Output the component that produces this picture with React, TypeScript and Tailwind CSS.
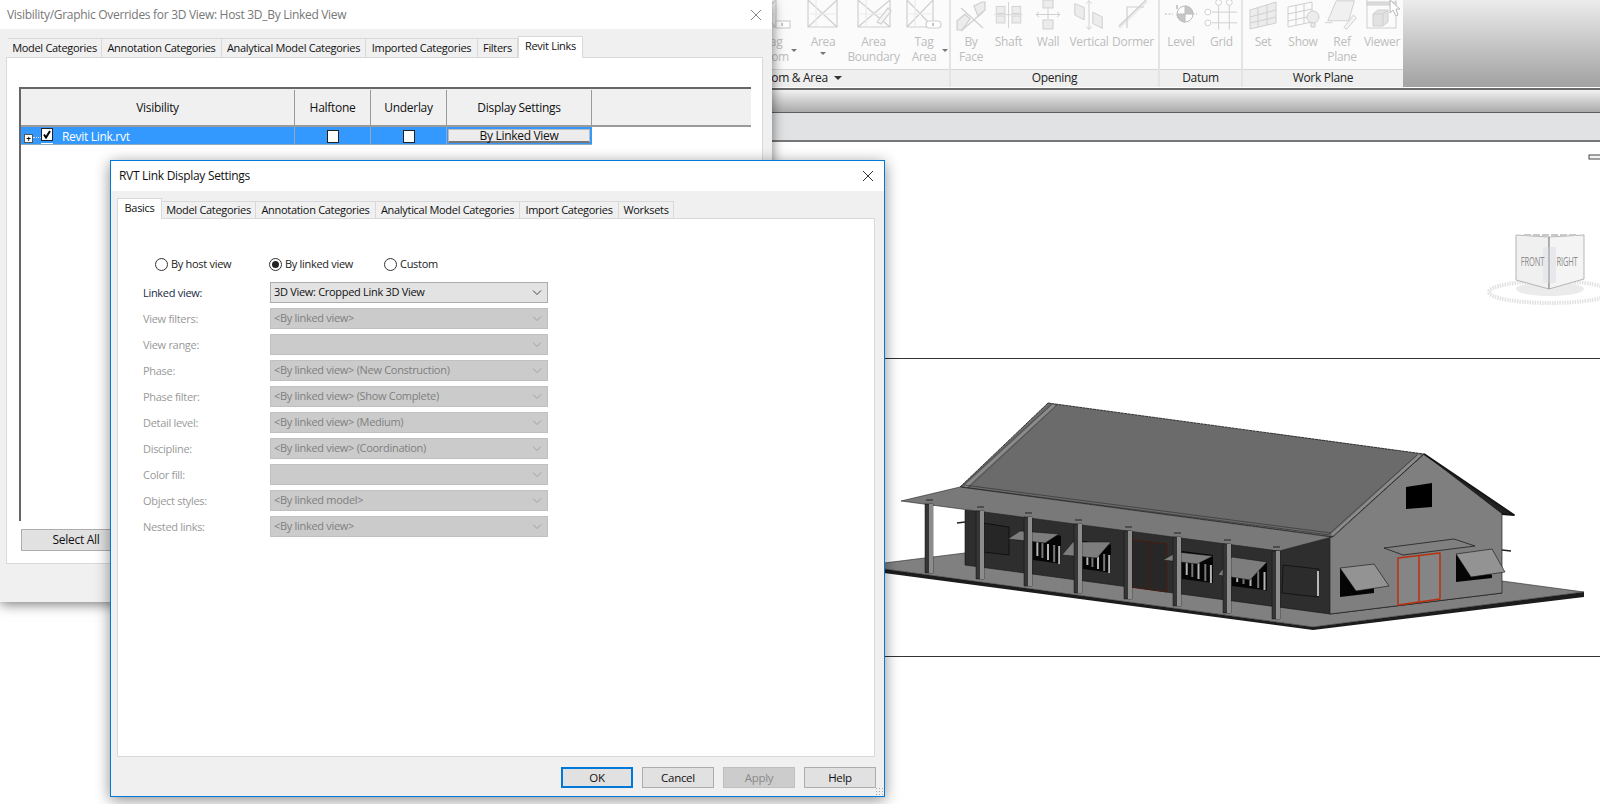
import type { ReactNode } from "react";

const FONT = "font-['Open_Sans','Noto_Sans',sans-serif] tracking-[-0.3px]";

// stroke and fill of the disabled ribbon icons
const S = "#cfcfcf";
const F = "#ececec";

function Crossed({ x = 6, w = 29, pencil = false, badge = "" }: { x?: number; w?: number; pencil?: boolean; badge?: string }) {
  return (
    <svg width="48" height="32" viewBox="0 0 48 32" fill="none" stroke={S} strokeWidth="1.2">
      <path d={`M${x} -1V27H${x + w}V-1M${x} 0L${x + w} 27M${x + w} 0L${x} 27`} />
      <path d={`M${x + 8} 0V27M${x} 14H${x + w}`} stroke="#ececec" />
      {pencil && <path d="M27 22L38 8L41 11L31 24Z" fill="#f4f4f4" />}
      {badge === "square" && (
        <g>
          <rect x="27" y="21" width="14" height="7" fill="#fff" />
          <path d="M33 23V26" stroke="#888" strokeWidth="1" />
        </g>
      )}
      {badge === "round" && (
        <g>
          <rect x="26" y="21" width="15" height="7" rx="3.5" fill="#fff" />
          <path d="M33 23V26" stroke="#888" strokeWidth="1" />
        </g>
      )}
    </svg>
  );
}

function IconByFace() {
  return (
    <svg width="40" height="32" viewBox="0 0 40 32" fill="none" stroke={S} strokeWidth="1.2">
      <path d="M6 21L14 14L19 19L11 30H6Z" fill={F} />
      <path d="M23 6L31 2H34V10L27 16Z" fill={F} />
      <path d="M10 8L32 28M32 12L10 31" />
    </svg>
  );
}

function IconShaft() {
  return (
    <svg width="40" height="32" viewBox="0 0 40 32" fill={F} stroke={S} strokeWidth="1">
      <rect x="6" y="5" width="10" height="8" />
      <rect x="24" y="5" width="10" height="8" />
      <rect x="6" y="16" width="10" height="8" />
      <rect x="24" y="16" width="10" height="8" />
      <path d="M20 0V30M4 14.500H36" fill="none" />
    </svg>
  );
}

function IconWall() {
  return (
    <svg width="40" height="32" viewBox="0 0 40 32" fill={F} stroke={S} strokeWidth="1">
      <rect x="15" y="0" width="10" height="8" />
      <rect x="15" y="20" width="10" height="9" />
      <path d="M8 14.500H32M20 9V19M11 12L8 14.500L11 17M29 12L32 14.500L29 17" fill="none" />
    </svg>
  );
}

function IconVertical() {
  return (
    <svg width="40" height="32" viewBox="0 0 40 32" fill={F} stroke={S} strokeWidth="1">
      <path d="M5 3L15 7V20L5 15Z" />
      <path d="M24 12L34 17V29L24 24Z" />
      <path d="M20 0V30M17 3L20 0L23 3M17 27L20 30L23 27" fill="none" />
    </svg>
  );
}

function IconDormer() {
  return (
    <svg width="40" height="32" viewBox="0 0 40 32" fill="none" stroke={S} strokeWidth="1.2">
      <path d="M6 28L34 1" strokeWidth="3" stroke="#ececec" />
      <path d="M14 28V7H31M6 26L33 0" />
    </svg>
  );
}

function IconLevel() {
  return (
    <svg width="40" height="32" viewBox="0 0 40 32" fill="none" stroke="#bcbcbc" strokeWidth="1">
      <path d="M4 14H12M28 14H36" strokeDasharray="2 1.500" />
      <path d="M16 5V9" stroke="#999" />
      <circle cx="24" cy="14" r="8" fill="#fff" />
      <path d="M24 14V6A8 8 0 0 1 32 14ZM24 14V22A8 8 0 0 1 16 14Z" fill="#c6c6c6" />
    </svg>
  );
}

function IconGrid() {
  return (
    <svg width="40" height="32" viewBox="0 0 40 32" fill="#fff" stroke={S} strokeWidth="1">
      <path d="M10 12H36M10 23H36M17 4V30M28 4V30" />
      <circle cx="6" cy="12" r="3" />
      <circle cx="6" cy="23" r="3" />
      <circle cx="17" cy="2" r="3" />
      <circle cx="28" cy="2" r="3" />
    </svg>
  );
}

function IconSet() {
  return (
    <svg width="40" height="32" viewBox="0 0 40 32" fill={F} stroke={S} strokeWidth="1">
      <path d="M7 10L33 2V23L7 29Z" />
      <path d="M15 8V27M24 5V25M7 17L33 10M7 23L33 17" fill="none" />
    </svg>
  );
}

function IconShow() {
  return (
    <svg width="40" height="32" viewBox="0 0 40 32" fill="none" stroke={S} strokeWidth="1">
      <path d="M5 7L29 2V22L5 27Z" />
      <path d="M13 5V25M21 4V24M5 14L29 9M5 21L29 16" />
      <circle cx="30" cy="17" r="6" fill={F} />
      <path d="M28 23H32V27H28Z" fill={F} />
    </svg>
  );
}

function IconRefPlane() {
  return (
    <svg width="40" height="32" viewBox="0 0 40 32" fill="none" stroke={S} strokeWidth="1">
      <path d="M14 0H33L27 21H5Z" fill="#f0f0f0" />
      <path d="M2 23H10" />
      <path d="M22 28L32 15L35 18L25 30Z" fill="#f4f4f4" />
    </svg>
  );
}

function IconViewer() {
  return (
    <svg width="40" height="32" viewBox="0 0 40 32" fill="none" stroke={S} strokeWidth="1">
      <rect x="5" y="-2" width="29" height="30" fill="#fbfbfb" />
      <rect x="5" y="2" width="29" height="3" fill="#dddddd" />
      <path d="M11 14L16 10H26V22L21 26H11Z" fill="#e2e2e2" />
      <path d="M11 14H21V26M21 14L26 10" />
      <path d="M28 0L28 13L31 10L34 16L36 15L34 9H38Z" fill="#ffffff" stroke="#b8b8b8" />
    </svg>
  );
}

type RibbonBtn = { label: ReactNode; width: string; icon: ReactNode; caret?: "side" | "below" };

function RibbonButton({ label, width, icon, caret }: RibbonBtn) {
  return (
    <div className={`relative flex h-full flex-col items-center ${width}`}>
      <div className="flex h-[34px] w-full shrink-0 justify-center overflow-hidden">{icon}</div>
      <div className="text-center text-[12px] leading-[15px] text-[#bdbdbd]">{label}</div>
      {caret === "side" && <span className="absolute right-[1px] top-[49px] h-0 w-0 border-x-[3px] border-t-[3px] border-x-transparent border-t-[#777]" />}
      {caret === "below" && <span className="absolute left-1/2 top-[52px] h-0 w-0 -translate-x-1/2 border-x-[3px] border-t-[3px] border-x-transparent border-t-[#777]" />}
    </div>
  );
}

function RibbonPanel({ title, className, children }: { title: ReactNode; className: string; children: ReactNode }) {
  return (
    <div className={`flex h-full flex-col ${className}`}>
      <div className="flex h-[69px] justify-end bg-[#fbfbfb]">{children}</div>
      <div className="flex h-[18px] items-center justify-center gap-[6px] border-t border-[#d6d6d6] bg-[#efefef] pb-[2px] text-[12px] text-[#222]">{title}</div>
    </div>
  );
}

function Ribbon() {
  return (
    <div className="flex h-[87px] shrink-0 bg-gradient-to-b from-[#ececec] to-[#a2a2a2]">
      <div className="w-[650px] bg-[#fbfbfb]" />
      <RibbonPanel
        className="w-[299px]"
        title={
          <>
            Room &amp; Area
            <span className="h-0 w-0 border-x-[4px] border-t-[4px] border-x-transparent border-t-[#333]" />
          </>
        }
      >
        <RibbonButton width="w-[50px]" caret="side" icon={<Crossed badge="square" x={-2} />} label={<>Tag<br />Room</>} />
        <RibbonButton width="w-[50px]" caret="below" icon={<Crossed x={9} />} label="Area" />
        <RibbonButton width="w-[51px]" icon={<Crossed x={8} w={32} pencil />} label={<>Area<br />Boundary</>} />
        <RibbonButton width="w-[50px]" caret="side" icon={<Crossed x={7} w={26} badge="round" />} label={<>Tag<br />Area</>} />
      </RibbonPanel>
      <div className="w-[2px] bg-[#e4e4e4]" />
      <RibbonPanel className="w-[207px]" title="Opening">
        <RibbonButton width="w-[40px]" icon={<IconByFace />} label={<>By<br />Face</>} />
        <RibbonButton width="w-[35px]" icon={<IconShaft />} label="Shaft" />
        <RibbonButton width="w-[44px]" icon={<IconWall />} label="Wall" />
        <RibbonButton width="w-[38px]" icon={<IconVertical />} label="Vertical" />
        <RibbonButton width="w-[50px]" icon={<IconDormer />} label="Dormer" />
      </RibbonPanel>
      <div className="w-[2px] bg-[#e4e4e4]" />
      <RibbonPanel className="w-[81px]" title="Datum">
        <RibbonButton width="w-[42px]" icon={<IconLevel />} label="Level" />
        <RibbonButton width="w-[39px]" icon={<IconGrid />} label="Grid" />
      </RibbonPanel>
      <div className="w-[2px] bg-[#e4e4e4]" />
      <RibbonPanel className="w-[160px]" title="Work Plane">
        <RibbonButton width="w-[40px]" icon={<IconSet />} label="Set" />
        <RibbonButton width="w-[40px]" icon={<IconShow />} label="Show" />
        <RibbonButton width="w-[38px]" icon={<IconRefPlane />} label={<>Ref<br />Plane</>} />
        <RibbonButton width="w-[42px]" icon={<IconViewer />} label="Viewer" />
      </RibbonPanel>
      <div className="flex-1" />
    </div>
  );
}

const COLUMNS = [
  [929, 504, 573],
  [980, 511, 579],
  [1028, 517, 586],
  [1078, 524, 593],
  [1128, 531, 599],
  [1177, 537, 606],
  [1227, 544, 613],
  [1276, 551, 619],
];

function AwningWindow({ x, y, w, awning }: { x: number; y: number; w: number; awning: string }) {
  const slope = 0.13;
  const bars = [0.12, 0.3, 0.5, 0.72, 0.9];
  return (
    <g>
      <polygon points={`${x},${y} ${x + w},${y + w * slope} ${x + w},${y + w * slope + 28} ${x},${y + 28}`} fill="#050505" />
      {bars.map((b, i) => (
        <rect key={i} x={x + w * b} y={y + 10 + i} width="2" height={14 + i} fill={i % 2 ? "#777" : "#b4b4b4"} />
      ))}
      <polygon points={awning} fill="#7d7d7d" stroke="#111" strokeWidth="0.5" />
    </g>
  );
}

// perspective render of the linked model, in page coordinates
function Building() {
  return (
    <g strokeLinejoin="round">
      {/* slab */}
      <polygon points="884,569 884,573 1313,630 1584,597 1584,592 1313,627" fill="#1c1c1c" />
      <polygon points="884,563 965,553 1502,581 1584,592 1313,627 884,569" fill="#808080" stroke="#222" strokeWidth="0.6" />
      <path d="M1330 614L1502 593" stroke="#111" fill="none" strokeWidth="0.8" />
      {/* porch wall */}
      <polygon points="965,510 1332,537 1330,614 965,565" fill="#2e2e2e" stroke="#111" strokeWidth="0.6" />
      {/* gable wall */}
      <polygon points="1330,537 1424,454 1502,513 1502,593 1330,614" fill="#7f7f7f" stroke="#222" strokeWidth="0.7" />
      {/* roof */}
      <polygon points="1048,403 1424,454 1332,537 960,487" fill="#6b6b6b" stroke="#111" strokeWidth="0.8" strokeDasharray="3 0.500" />
      <path d="M1054 405L965 487" stroke="#8c8c8c" strokeWidth="2.500" fill="none" />
      <path d="M1052 404L962 486M1057 405L968 488" stroke="#333" strokeWidth="0.5" fill="none" />
      <path d="M1420 455L1332 535" stroke="#8c8c8c" strokeWidth="2.500" fill="none" />
      <path d="M1424 454L1333 537M1417 455L1329 534" stroke="#333" strokeWidth="0.6" fill="none" />
      <path d="M1424 454L1514 515L1502 514" stroke="#151515" strokeWidth="1.800" fill="#222" />
      {/* porch roof */}
      <polygon points="960,487 901,501 1279,551 1332,537" fill="#797979" stroke="#222" strokeWidth="0.6" />
      <path d="M962 487L1330 535M964 485L1331 533" stroke="#2c2c2c" strokeWidth="0.6" fill="none" />
      {/* porch windows */}
      <polygon points="983,523 1009,527 1009,555 983,552" fill="#262626" stroke="#0a0a0a" strokeWidth="0.8" />
      <AwningWindow x={1033} y={532} w={28} awning="1008,539 1020,531 1059,534 1045,543" />
      <AwningWindow x={1083} y={541} w={28} awning="1062,555 1073,542 1111,542 1097,558" />
      <polygon points="1132,540 1167,544 1167,592 1132,587" fill="#272727" stroke="#4a1a10" strokeWidth="1" />
      <path d="M1149 543V590" stroke="#4a1a10" strokeWidth="1" />
      <AwningWindow x={1182} y={551} w={31} awning="1163,560 1177,552 1213,556 1197,564" />
      <AwningWindow x={1232} y={558} w={35} awning="1218,575 1232,557 1267,562 1250,580" />
      <polygon points="1283,565 1319,569 1318,597 1282,593" fill="#2c2c2c" stroke="#0a0a0a" strokeWidth="0.7" />
      <rect x="1317" y="571" width="2" height="25" fill="#b8b8b8" />
      {/* columns */}
      {COLUMNS.map(([x, top, bottom]) => (
        <g key={x}>
          <rect x={x - 4} y={top} width="8" height={bottom - top} fill="#353535" stroke="#111" strokeWidth="0.5" />
          <rect x={x} y={top} width="4" height={bottom - top} fill="#8c8c8c" />
          <path d={`M${x - 3} ${top - 4}H${x + 4}`} stroke="#222" strokeWidth="1" />
        </g>
      ))}
      {/* gable windows and door */}
      <polygon points="1406,487 1432,483 1432,507 1406,509" fill="#000" />
      <polygon points="1340,568 1340,597 1374,593 1374,586" fill="#050505" />
      <polygon points="1340,568 1374,564 1389,586 1356,591" fill="#939393" stroke="#111" strokeWidth="0.6" />
      <polygon points="1398,558 1440,553 1440,599 1398,605" fill="#858585" stroke="#b8300f" strokeWidth="1.500" />
      <path d="M1419 556V602" stroke="#b8300f" strokeWidth="1.500" />
      <polygon points="1384,548 1454,539 1475,546 1403,555" fill="#808080" stroke="#111" strokeWidth="0.7" />
      <polygon points="1456,554 1456,582 1492,578 1492,575" fill="#050505" />
      <polygon points="1456,554 1492,549 1505,572 1471,577" fill="#939393" stroke="#111" strokeWidth="0.6" />
      <path d="M957 523L965 522M1502 550L1511 551" stroke="#222" strokeWidth="1.500" />
    </g>
  );
}

function ViewCube() {
  return (
    <g>
      <ellipse cx="1550" cy="292" rx="61" ry="11" fill="none" stroke="#e2e2e2" strokeWidth="4" strokeDasharray="1.500 1" />
      <ellipse cx="1550" cy="289" rx="34" ry="7" fill="#e2e2e2" opacity="0.7" />
      <polygon points="1516,235 1549,237 1549,289 1516,280" fill="#f0f0f0" stroke="#b5b5b5" />
      <polygon points="1549,237 1584,235 1584,279 1549,289" fill="#f4f4f4" stroke="#b5b5b5" />
      <rect x="1543" y="247" width="13" height="36" fill="#e6e8eb" />
      <path d="M1549 237V289" stroke="#8f8f8f" />
      <path d="M1524 235H1578" stroke="#c8c8c8" strokeWidth="2" strokeDasharray="7 2" />
      {/* the cube's labels are tall and narrow, so squeeze them sideways */}
      <text transform="translate(1532.500 266) scale(0.58 1)" fontSize="13" textAnchor="middle" fill="#8c8c8c" fontFamily="Open Sans">FRONT</text>
      <text transform="translate(1567 266) scale(0.58 1)" fontSize="13" textAnchor="middle" fill="#8c8c8c" fontFamily="Open Sans">RIGHT</text>
    </g>
  );
}

function Canvas() {
  return (
    <svg className="block h-[662px] w-[1600px] bg-white" viewBox="0 142 1600 662">
      <path d="M740 358.500H1600M740 656.500H1600" stroke="#333" strokeWidth="1" />
      <rect x="1589" y="155" width="13" height="4" fill="#f4f4f4" stroke="#444" />
      <Building />
      <ViewCube />
    </svg>
  );
}

function CloseIcon({ color }: { color: string }) {
  return (
    <svg width="12" height="12" viewBox="0 0 12 12" stroke={color} strokeWidth="1" fill="none">
      <path d="M1 1L11 11M11 1L1 11" />
    </svg>
  );
}

function CheckBox({ checked = false }: { checked?: boolean }) {
  return (
    <span className="flex h-[13px] w-[12px] items-center justify-center border border-[#222] bg-white">
      {checked && (
        <svg width="8" height="9" viewBox="0 0 8 9" fill="none" stroke="#000" strokeWidth="2">
          <path d="M1 4.500L3 7.500L7 1" />
        </svg>
      )}
    </span>
  );
}

const BACK_TABS = [
  ["Model Categories", "w-[94px]"],
  ["Annotation Categories", "w-[120px]"],
  ["Analytical Model Categories", "w-[144px]"],
  ["Imported Categories", "w-[112px]"],
  ["Filters", "w-[40px]"],
];

function OverridesDialog() {
  return (
    <div className="absolute left-0 top-0 flex h-[602px] w-[772px] flex-col bg-[#f0f0f0] shadow-[0_2px_12px_rgba(0,0,0,0.55)]">
      <div className="flex h-[29px] shrink-0 items-center justify-between bg-white pl-[7px] pr-[10px] text-[12px] text-[#777]">
        <span>Visibility/Graphic Overrides for 3D View: Host 3D_By Linked View</span>
        <CloseIcon color="#888" />
      </div>
      <div className="mt-[7px] flex h-[21px] items-end pl-[8px] text-[11px] text-[#111]">
        {BACK_TABS.map(([name, w]) => (
          <div key={name} className={`flex h-[19px] items-center justify-center border-r border-t border-[#d9d9d9] ${w}`}>
            {name}
          </div>
        ))}
        <div className="z-10 -mb-px flex h-[22px] w-[65px] items-center justify-center border-x border-t border-[#d9d9d9] bg-white pb-[2px]">Revit Links</div>
      </div>
      <div className="ml-[6px] flex h-[507px] w-[757px] flex-col border border-[#d9d9d9] bg-white pl-[12px] pt-[29px]">
        <div className="flex h-[434px] w-[732px] flex-col border-l-2 border-t-2 border-[#666]">
          <div className="flex h-[38px] shrink-0 border-b-2 border-[#9a9a9a] bg-[#f0f0f0] pt-[1px] text-center text-[12px] text-[#111]">
            <div className="flex w-[274px] items-center justify-center border-r border-[#9a9a9a]">Visibility</div>
            <div className="flex w-[76px] items-center justify-center border-r border-[#9a9a9a]">Halftone</div>
            <div className="flex w-[76px] items-center justify-center border-r border-[#9a9a9a]">Underlay</div>
            <div className="flex w-[145px] items-center justify-center border-r border-[#9a9a9a]">Display Settings</div>
          </div>
          <div className="flex h-[18px] shrink-0 text-[12px] text-white">
            <div className="relative flex w-[274px] items-center border-b border-r border-[#8fa8c4] bg-[#3399ff] pl-[3px] pt-[2px]">
              <span className="mt-[4px] flex h-[9px] w-[9px] items-center justify-center border border-[#555] bg-white text-[8px] font-bold leading-none text-black">+</span>
              <span className="mt-[1px] w-[8px] border-t border-dotted border-[#ddd]" />
              <span className="-mt-[4px]"><CheckBox checked /></span>
              <span className="absolute bottom-0 left-[20px] h-[1px] w-[12px] bg-white" />
              <span className="ml-[9px]">Revit Link.rvt</span>
            </div>
            <div className="flex w-[76px] items-center justify-center border-b border-r border-[#8fa8c4] bg-[#3399ff] pt-[1px]"><CheckBox /></div>
            <div className="flex w-[76px] items-center justify-center border-b border-r border-[#8fa8c4] bg-[#3399ff] pt-[1px]"><CheckBox /></div>
            <div className="flex w-[145px] items-start border-b border-[#8fa8c4] bg-[#3399ff] pl-[1px] pt-[2px]">
              <div className="flex h-[14px] w-[142px] items-center justify-center border border-b-2 border-[#bbb] border-b-[#777] bg-[#ececec] text-[12px] text-[#111]">By Linked View</div>
            </div>
          </div>
          <div className="flex-1" />
        </div>
        <div className="ml-[2px] mt-[8px] flex h-[22px] w-[110px] items-center justify-center border border-[#adadad] bg-[#e1e1e1] text-[12px] text-[#111]">Select All</div>
      </div>
    </div>
  );
}

const FRONT_TABS = [
  ["Model Categories", "w-[94px]"],
  ["Annotation Categories", "w-[120px]"],
  ["Analytical Model Categories", "w-[144px]"],
  ["Import Categories", "w-[99px]"],
  ["Worksets", "w-[55px]"],
];

const ROWS: [string, string][] = [
  ["View filters:", "<By linked view>"],
  ["View range:", ""],
  ["Phase:", "<By linked view> (New Construction)"],
  ["Phase filter:", "<By linked view> (Show Complete)"],
  ["Detail level:", "<By linked view> (Medium)"],
  ["Discipline:", "<By linked view> (Coordination)"],
  ["Color fill:", ""],
  ["Object styles:", "<By linked model>"],
  ["Nested links:", "<By linked view>"],
];

function Radio({ label, checked = false, width }: { label: string; checked?: boolean; width: string }) {
  return (
    <div className={`flex items-center gap-[3px] text-[11px] text-[#222] ${width}`}>
      <span className="flex h-[13px] w-[13px] items-center justify-center rounded-full border border-[#333] bg-white">
        {checked && <span className="h-[7px] w-[7px] rounded-full bg-[#222]" />}
      </span>
      {label}
    </div>
  );
}

function Chevron({ color }: { color: string }) {
  return (
    <svg width="10" height="6" viewBox="0 0 10 6" fill="none" stroke={color} strokeWidth="1">
      <path d="M1 0.500L5 4.500L9 0.500" />
    </svg>
  );
}

function FieldRow({ label, value, enabled = false }: { label: string; value: string; enabled?: boolean }) {
  return (
    <div className="flex h-[21px] items-center text-[11px]">
      <div className={`w-[127px] pt-[1px] ${enabled ? "text-[#1a2a44]" : "text-[#999]"}`}>{label}</div>
      <div
        className={`flex h-[21px] w-[278px] items-center justify-between border pl-[3px] pr-[5px] ${
          enabled ? "border-[#adadad] bg-[#e3e3e3] text-[#111]" : "border-[#c0c0c0] bg-[#cbcbcb] text-[#7f7f7f]"
        }`}
      >
        <span>{value}</span>
        <Chevron color={enabled ? "#444" : "#a0a0a0"} />
      </div>
    </div>
  );
}

function FooterButton({ label, variant }: { label: string; variant?: "primary" | "disabled" }) {
  const look =
    variant === "primary"
      ? "border-2 border-[#0078d7] bg-[#e1e1e1] text-[#111]"
      : variant === "disabled"
        ? "border border-[#bfbfbf] bg-[#cccccc] text-[#8a8a8a]"
        : "border border-[#adadad] bg-[#e1e1e1] text-[#111]";
  return <div className={`flex h-[21px] w-[72px] items-center justify-center text-[11.500px] ${look}`}>{label}</div>;
}

function SettingsDialog() {
  return (
    <div className="absolute left-[110px] top-[160px] flex h-[637px] w-[775px] flex-col border border-[#0078d7] bg-[#f0f0f0] shadow-[0_3px_14px_rgba(0,0,0,0.45)]">
      <div className="flex h-[30px] shrink-0 items-center justify-between bg-white pl-[8px] pr-[10px] text-[12px] text-[#111]">
        <span>RVT Link Display Settings</span>
        <CloseIcon color="#333" />
      </div>
      <div className="mt-[7px] flex h-[20px] items-end pl-[6px] text-[11px] text-[#111]">
        <div className="z-10 -mb-px flex h-[21px] w-[45px] items-center justify-center border-x border-t border-[#d9d9d9] bg-white pb-[2px]">Basics</div>
        {FRONT_TABS.map(([name, w]) => (
          <div key={name} className={`flex h-[17px] items-center justify-center border-r border-t border-[#d9d9d9] ${w}`}>
            {name}
          </div>
        ))}
      </div>
      <div className="ml-[6px] flex h-[539px] w-[758px] flex-col border border-[#d9d9d9] bg-white pl-[25px] pt-[38px]">
        <div className="mb-[11px] flex h-[14px] pl-[12px]">
          <Radio label="By host view" width="w-[114px]" />
          <Radio checked label="By linked view" width="w-[115px]" />
          <Radio label="Custom" width="w-[80px]" />
        </div>
        <div className="flex flex-col gap-[5px]">
          <FieldRow enabled label="Linked view:" value="3D View: Cropped Link 3D View" />
          {ROWS.map(([label, value]) => (
            <FieldRow key={label} label={label} value={value} />
          ))}
        </div>
      </div>
      <div className="relative flex flex-1 justify-end gap-[9px] pr-[8px] pt-[10px]">
        <FooterButton label="OK" variant="primary" />
        <FooterButton label="Cancel" />
        <FooterButton label="Apply" variant="disabled" />
        <FooterButton label="Help" />
        <span className="absolute bottom-[1px] right-[1px] h-[8px] w-[8px] bg-[radial-gradient(#aaa_1px,transparent_1px)] bg-[length:3px_3px]" />
      </div>
    </div>
  );
}

export default function App() {
  return (
    <div className={`relative flex h-[804px] w-[1600px] flex-col overflow-hidden bg-white ${FONT}`}>
      <Ribbon />
      <div className="h-[1px] shrink-0 bg-white" />
      <div className="h-[2px] shrink-0 bg-[#6a6a6a]" />
      <div className="h-[22px] shrink-0 bg-gradient-to-b from-[#f2f2f2] to-[#aaaaaa]" />
      <div className="h-[1px] shrink-0 bg-[#5e5e5e]" />
      <div className="h-[27px] shrink-0 bg-[#e1e2e3]" />
      <div className="h-[2px] shrink-0 bg-[#777]" />
      <Canvas />
      <OverridesDialog />
      <SettingsDialog />
    </div>
  );
}
